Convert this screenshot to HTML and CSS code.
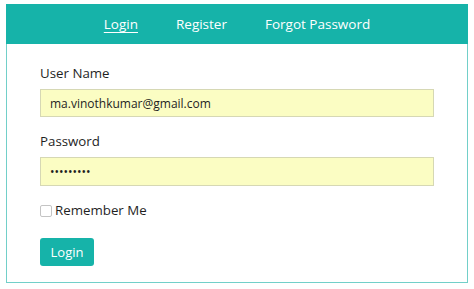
FILE: index.html
```html
<!doctype html>
<html lang="en">
<head>
    <meta charset="UTF-8">
    <title>Login</title>
    <link rel="stylesheet" href="styles.css">
</head>
<body>
<div class="panel">
    <div class="tabs">
        <a href="#" class="tab active">Login</a>
        <a href="#" class="tab">Register</a>
        <a href="#" class="tab">Forgot Password</a>
    </div>
    <form class="login-form">
        <label class="field-label" for="user">User Name</label>
        <input type="text" id="user" class="field" value="ma.vinothkumar@gmail.com">
        <label class="field-label pass-label" for="pass">Password</label>
        <input type="password" id="pass" class="field" value="123456789">
        <label class="remember"><input type="checkbox"><span>Remember Me</span></label>
        <button type="button" class="btn-login">Login</button>
    </form>
</div>
</body>
</html>
```

FILE: styles.css
```css
* {
    margin: 0;
    padding: 0;
    box-sizing: border-box;
}

body {
    background: #fff;
    font-family: "Open Sans", "Liberation Sans", sans-serif;
    color: #1f1f1f;
}

.panel {
    width: 462px;
    margin: 4px 6px;
}

.tabs {
    height: 40px;
    background-color: #16b3a9;
    display: flex;
    justify-content: center;
    align-items: center;
    gap: 38px;
}

.tab {
    color: #fff;
    font-size: 13.5px;
    text-decoration: none;
}

.tab.active {
    text-decoration: underline;
    text-underline-offset: 3px;
}

.login-form {
    border: 1px solid #72cfc9;
    border-top: none;
    padding: 19px 33px 16px 33px;
    display: flex;
    flex-direction: column;
    align-items: flex-start;
}

.field-label {
    font-size: 13.3px;
    line-height: 20px;
    margin-bottom: 6px;
}

.pass-label {
    margin-top: 14px;
}

.field {
    width: 394px;
    height: 28px;
    border: 1px solid #d6d8b4;
    background-color: #fbfdc3;
    padding: 0 9px;
    font-family: "Open Sans", "Liberation Sans", sans-serif;
    font-size: 12px;
    color: #1f1f1f;
    outline: none;
}

#pass {
    height: 29px;
    font-size: 12px;
}

.remember {
    display: flex;
    align-items: center;
    margin-top: 14px;
    font-size: 13.3px;
    line-height: 20px;
}

.remember input {
    appearance: none;
    width: 12px;
    height: 12px;
    margin: 1px 3px 0 0;
    border: 1px solid #c4c4c4;
    border-radius: 2px;
    background: #fff;
}

.btn-login {
    margin-top: 18px;
    width: 54px;
    height: 28px;
    border: none;
    border-radius: 3px;
    background-color: #16b3a9;
    color: #fff;
    font-family: "Open Sans", "Liberation Sans", sans-serif;
    font-size: 13px;
}
```
